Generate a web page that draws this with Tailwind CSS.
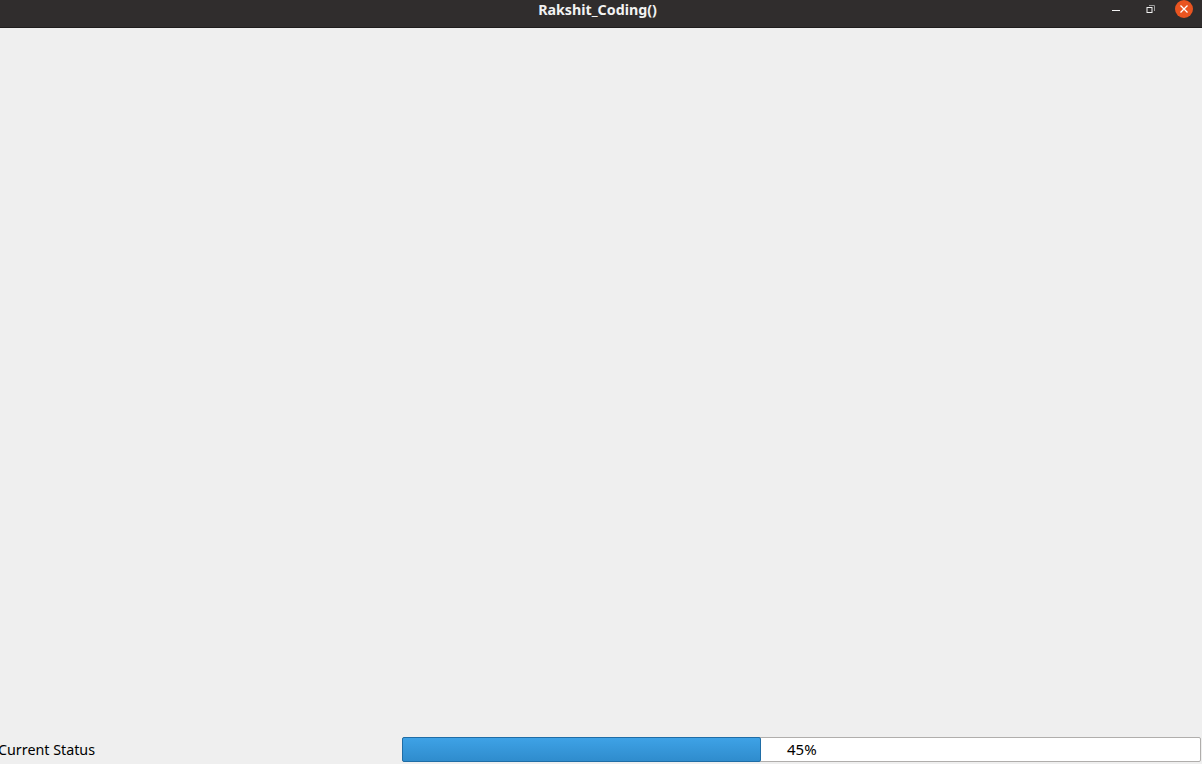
<!DOCTYPE html>
<html lang="en">
  <head>
    <meta charset="UTF-8" />
    <title>Rakshit_Coding()</title>
    <script src="https://cdn.jsdelivr.net/npm/@tailwindcss/browser@4"></script>
  </head>
  <body class="h-screen overflow-hidden flex flex-col bg-[#efefef] font-['Noto_Sans',sans-serif]">
    <!-- Title bar -->
    <header class="relative h-[28px] shrink-0 flex items-start justify-center pr-[7px] bg-[#302d2d] border-b border-[#1f1d1d]">
      <h1 class="text-[14.25px] leading-[19px] font-bold text-[#f2f2f2]">Rakshit_Coding()</h1>
      <div class="absolute right-[9px] top-0 h-[18px] flex items-center">
        <button class="w-[34px] h-full flex items-center justify-center" aria-label="Minimize">
          <span class="block w-[8px] h-[1px] mt-[3px] bg-[#f2f2f2]"></span>
        </button>
        <button class="w-[34px] h-full flex items-center justify-center" aria-label="Restore">
          <svg width="9" height="9" viewBox="0 0 9 9" fill="none">
            <path d="M3 0.5H8.5V6" stroke="#9a9a9a" />
            <rect x="1" y="2.5" width="5" height="5" stroke="#f2f2f2" />
          </svg>
        </button>
        <button class="w-[18px] h-[18px] ml-[8px] rounded-full bg-[#e95420] flex items-center justify-center" aria-label="Close">
          <svg width="8" height="8" viewBox="0 0 8 8">
            <path d="M0.5 0.5L7.5 7.5M7.5 0.5L0.5 7.5" stroke="#ffffff" stroke-width="1.3" />
          </svg>
        </button>
      </div>
    </header>

    <main class="flex-1"></main>

    <!-- Status row -->
    <footer class="h-[25px] mb-[2px] shrink-0 flex items-center pr-[1px]">
      <span class="w-[404px] -ml-[2px] shrink-0 text-[14.3px] text-black">Current Status</span>
      <div class="relative flex-1 h-full flex bg-white border border-[#b0aeac] rounded-[2px]">
        <div class="w-[45%] -m-[1px] bg-gradient-to-b from-[#3ea2e6] to-[#2f8ccd] border border-[#1f6da6] rounded-[2px]"></div>
        <span class="absolute left-[384px] top-0 h-full flex items-center text-[15px] text-black">45%</span>
      </div>
    </footer>
  </body>
</html>
